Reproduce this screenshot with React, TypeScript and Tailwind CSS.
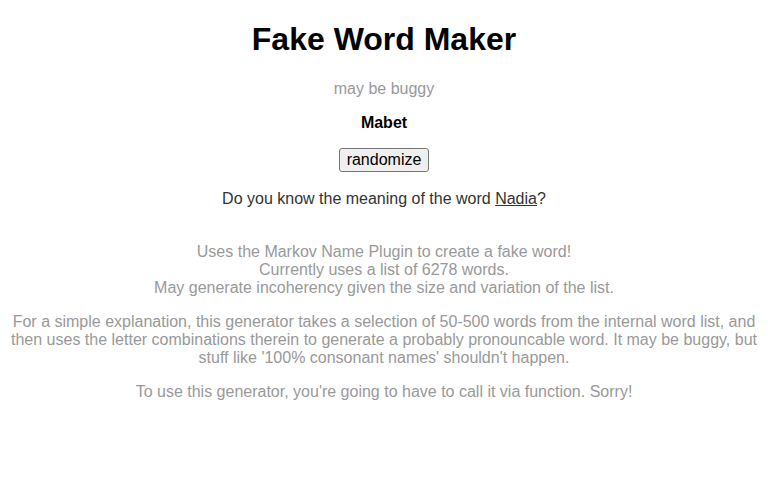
import { useState } from "react";

const words = ["Mabet", "Lorin", "Tessup", "Gravel", "Ornith", "Belsa"];

export default function App() {
    const [word, setWord] = useState("Mabet");

    const randomize = () => {
        setWord(words[Math.floor(Math.random() * words.length)]);
    };

    return (
        <div className="px-2 text-center text-[16px] text-black font-['Liberation_Sans',Arial,sans-serif]">
            <h1 className="text-[32px] font-bold leading-[37px] my-[21.44px]">Fake Word Maker</h1>
            <p className="leading-[18px] text-[#999]">may be buggy</p>
            <p className="mt-4 leading-[18px] font-bold">{word}</p>
            <div className="mt-4 flex justify-center">
                <button
                    onClick={randomize}
                    className="h-[24px] px-[7px] bg-[#efefef] border border-[#767676] rounded-[3px] text-[16px] leading-[19px] text-black hover:bg-[#e5e5e5]"
                >
                    randomize
                </button>
            </div>
            <p className="mt-[18px] leading-[18px] text-[#333]">
                Do you know the meaning of the word <span className="underline">Nadia</span>?
            </p>

            <div className="mt-[35px] leading-[18px] text-[#999]">
                <p>
                    Uses the Markov Name Plugin to create a fake word!
                    <br />
                    Currently uses a list of 6278 words.
                    <br />
                    May generate incoherency given the size and variation of the list.
                </p>
                <p className="mt-4">
                    For a simple explanation, this generator takes a selection of 50-500 words from the internal word list, and then uses the letter combinations therein to generate a probably pronouncable word. It may be buggy, but stuff like '100% consonant names' shouldn't happen.
                </p>
                <p className="mt-4">To use this generator, you're going to have to call it via function. Sorry!</p>
            </div>
        </div>
    );
}
